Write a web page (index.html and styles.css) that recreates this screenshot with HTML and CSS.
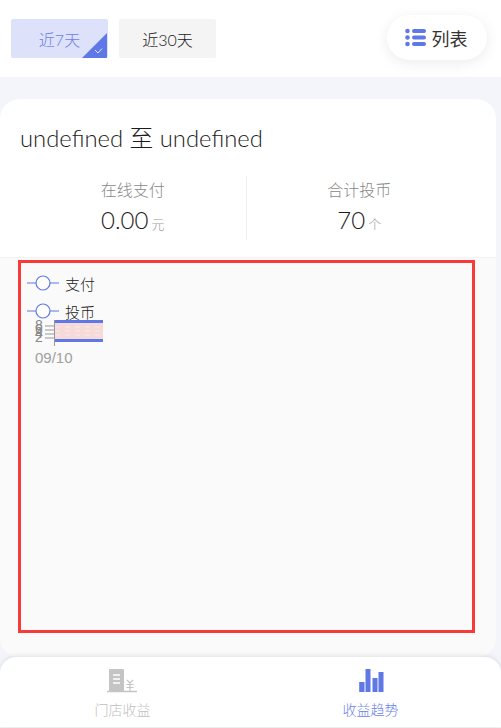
FILE: index.html
```html
<!DOCTYPE html>
<html lang="zh-CN">
<head>
  <meta charset="UTF-8" />
  <meta name="viewport" content="width=device-width, initial-scale=1.0"/>
  <title>收益趋势</title>
  <link rel="stylesheet" href="styles.css">
</head>
<body>

  <!-- 顶部筛选 -->
  <div class="top-bar">
    <a class="range-tab active">近7天
      <svg class="tab-corner" width="26" height="25" viewBox="0 0 26 25">
        <path d="M25 0V24a1 1 0 0 1-1 1H0Z" fill="#5f78e6"/>
        <path d="M13 17l3 3 4-4.500" fill="none" stroke="#dfe4fa" stroke-width="1"/>
      </svg>
    </a>
    <a class="range-tab">近30天</a>
    <a class="list-btn">
      <svg width="21" height="19" viewBox="0 0 21 19">
        <g fill="#5f78e6">
          <circle cx="2.500" cy="3" r="2.300"/>
          <circle cx="2.500" cy="9.500" r="2.300"/>
          <circle cx="2.500" cy="16" r="2.300"/>
          <rect x="7" y="1" width="14" height="4" rx="2"/>
          <rect x="7" y="7.500" width="14" height="4" rx="2"/>
          <rect x="7" y="14" width="14" height="4" rx="2"/>
        </g>
      </svg>
      列表
    </a>
  </div>

  <!-- 收益卡片 -->
  <section class="card">
    <h2 class="date-range">undefined 至 undefined</h2>
    <div class="stats">
      <div class="stat">
        <div class="stat-label">在线支付</div>
        <div class="stat-value">0.00<small>元</small></div>
      </div>
      <div class="stat">
        <div class="stat-label">合计投币</div>
        <div class="stat-value">70<small>个</small></div>
      </div>
    </div>

    <div class="chart-area">
      <div class="chart-box">
        <div class="legend-item">
          <svg width="32" height="16" viewBox="0 0 32 16"><path d="M0 8H32" stroke="#5f78e6"/><circle cx="16" cy="8" r="7" fill="#fff" stroke="#5f78e6" stroke-width="1.200"/></svg>
          支付
        </div>
        <div class="legend-item">
          <svg width="32" height="16" viewBox="0 0 32 16"><path d="M0 8H32" stroke="#5f78e6"/><circle cx="16" cy="8" r="7" fill="#fff" stroke="#5f78e6" stroke-width="1.200"/></svg>
          投币
        </div>

        <!-- 图表挤在一起的坐标轴 -->
        <div class="axis-nums">
          <span>8</span><span>6</span><span>4</span><span>2</span>
        </div>
        <svg class="plot" width="52" height="28" viewBox="0 0 52 28">
          <rect x="2" y="2" width="48" height="18" fill="#f6d9d9"/>
          <path d="M2 7H50M2 11H50M2 15H50" stroke="#fff" stroke-width="1" stroke-dasharray="5 5" opacity=".45"/>
          <path d="M2 1.500H50M2 20.500H50" stroke="#5f78e6" stroke-width="3"/>
          <path d="M1.500 0V26" stroke="#999" stroke-width="1"/>
          <path d="M-8 6H2M-8 10H2M-8 14H2M-8 18H2" stroke="#999"/>
        </svg>
        <div class="axis-date">09/10</div>
      </div>
    </div>
  </section>

  <!-- 底部导航 -->
  <nav class="tab-bar">
    <a class="tab-item">
      <svg class="shop-icon" width="30" height="24" viewBox="0 0 30 24">
        <path d="M2 1a1 1 0 0 1 1-1H16a1 1 0 0 1 1 1V22H2Z" fill="#c4c4c4"/>
        <path d="M6 6H13M6 10H13M6 14H13" stroke="#fff" stroke-width="1.500"/>
        <path d="M0 22.500H30" stroke="#c4c4c4" stroke-width="1.500"/>
        <path d="M20 11l3 3 3-3M23 14v8M19.500 15.500H26.500M19.500 18.500H26.500" fill="none" stroke="#c4c4c4" stroke-width="1.200"/>
      </svg>
      门店收益
    </a>
    <a class="tab-item active">
      <svg width="26" height="24" viewBox="0 0 26 24">
        <g fill="#5f78e6">
          <rect x="1.200" y="13" width="5.300" height="10"/>
          <rect x="7.500" y="0" width="5" height="23"/>
          <rect x="14.500" y="9" width="5" height="14"/>
          <rect x="20.500" y="3" width="5" height="20"/>
        </g>
      </svg>
      收益趋势
    </a>
  </nav>

</body>
</html>
```

FILE: styles.css
```css
* {
  box-sizing: border-box;
}

body {
  margin: 0;
  height: 728px;
  overflow: hidden;
  background-color: #f4f5fa;
  color: #333;
  font-family: 'Lato', 'Noto Sans CJK SC', sans-serif;
}

.top-bar {
  height: 77px;
  padding: 19px 14px 0 11px;
  background-color: #fff;
  display: flex;
  align-items: flex-start;
  gap: 11px;
}

.range-tab {
  position: relative;
  width: 97px;
  height: 39px;
  border-radius: 2px;
  background-color: #f4f4f4;
  font-family: 'Lato', 'Noto Sans CJK SC', sans-serif;
  font-weight: 300;
  font-size: 16px;
  color: #222;
  display: flex;
  justify-content: center;
  align-items: center;
}

.range-tab.active {
  background-color: #dde1f9;
  color: #6c82e6;
}

.tab-corner {
  position: absolute;
  right: 0;
  bottom: 0;
}

.list-btn {
  margin: -4px 0 0 auto;
  width: 100px;
  height: 45px;
  padding-right: 2px;
  border-radius: 23px;
  background-color: #fff;
  box-shadow: 0 3px 14px rgba(0, 0, 0, 0.08);
  font-size: 18px;
  color: #333;
  display: flex;
  justify-content: center;
  align-items: center;
  gap: 6px;
}

.card {
  margin: 22px 5px 0 0;
  height: 558px;
  border-radius: 20px;
  background-color: #fff;
  overflow: hidden;
  display: flex;
  flex-direction: column;
}

.date-range {
  margin: 0;
  padding: 23px 0 0 20px;
  font-size: 23.800px;
  line-height: 33px;
  font-weight: 300;
  color: #1c1c1c;
}

.stats {
  margin-top: 21px;
  padding: 0 24px 0 20px;
  display: flex;
}

.stat {
  flex: 1;
  height: 64px;
  text-align: center;
}

.stat + .stat {
  border-left: 1px solid #eeeeee;
}

.stat-label {
  font-size: 16px;
  line-height: 28px;
  font-weight: 300;
  color: #888;
}

.stat-value {
  font-size: 24px;
  line-height: 32px;
  font-weight: 300;
  color: #1c1c1c;
}

.stat-value small {
  margin-left: 3px;
  font-size: 13px;
  color: #999;
}

.chart-area {
  margin-top: 17px;
  flex: 1;
  padding: 2px 0 0 18px;
  background-color: #fafafa;
  border-top: 1px solid #f2f2f2;
}

.chart-box {
  position: relative;
  width: 457px;
  height: 373px;
  padding: 6px 0 0 6px;
  border: 3px solid #f93a3a;
}

.legend-item {
  height: 28px;
  font-size: 15px;
  font-weight: 300;
  color: #222;
  display: flex;
  align-items: center;
  gap: 6px;
}

.axis-nums {
  position: absolute;
  left: 14px;
  top: 60px;
  display: flex;
  flex-direction: column;
  font-family: 'Liberation Sans', sans-serif;
  font-size: 14px;
  line-height: 4px;
  color: #888;
}

.plot {
  position: absolute;
  left: 32px;
  top: 57px;
  overflow: visible;
}

.axis-date {
  position: absolute;
  left: 14px;
  top: 86px;
  font-family: 'Liberation Sans', sans-serif;
  font-size: 15px;
  line-height: 18px;
  color: #a0a0a0;
}

.tab-bar {
  position: absolute;
  left: 0;
  right: 0;
  top: 657px;
  height: 70px;
  padding-right: 8px;
  border-radius: 16px 16px 0 0;
  background-color: #fff;
  box-shadow: 0 -1px 5px rgba(0, 0, 0, 0.1);
  display: flex;
  gap: 3px;
}

.tab-item {
  flex: 1;
  padding-top: 12px;
  font-size: 14px;
  font-weight: 300;
  color: #c0c0c0;
  display: flex;
  flex-direction: column;
  align-items: center;
  gap: 6px;
}

.tab-item.active {
  color: #6c82e6;
}

.shop-icon {
  margin-right: 1px;
}
```
